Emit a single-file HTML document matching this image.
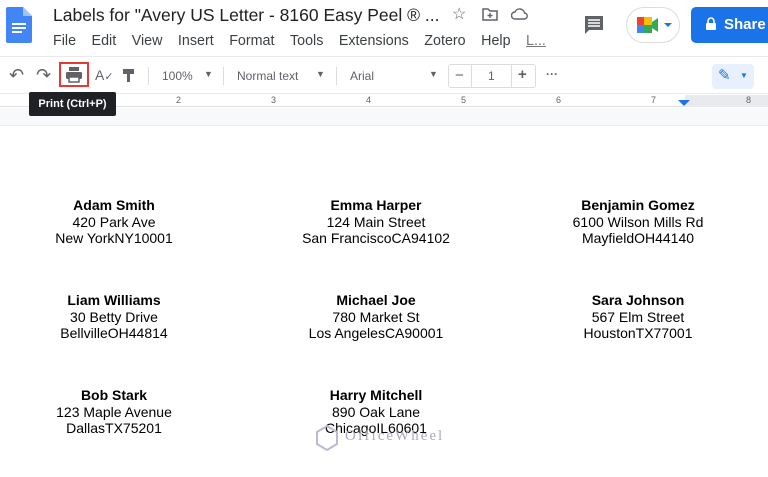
<!DOCTYPE html>
<html><head><style>
*{margin:0;padding:0;box-sizing:border-box}
body{width:768px;height:477px;overflow:hidden;background:#fff;font-family:"Liberation Sans",Arial,sans-serif;position:relative;color:#202124}
.a{position:absolute;white-space:nowrap}
.menu span{margin-right:15.5px}
.lbl{position:absolute;width:240px;text-align:center;font-size:14px;line-height:16.5px;color:#000}
.lbl b{display:block}
.tb{color:#5f6368;font-size:12px}
</style></head><body>
<svg class="a" style="left:6px;top:7px" width="26" height="36" viewBox="0 0 26 36"><path d="M2 0h15l9 9v25a2 2 0 0 1-2 2H2a2 2 0 0 1-2-2V2a2 2 0 0 1 2-2z" fill="#4285f4"/><path d="M17 0v9h9z" fill="#a1c2fa"/><rect x="6" y="16" width="14" height="2" fill="#fff"/><rect x="6" y="20" width="14" height="2" fill="#fff"/><rect x="6" y="24" width="10" height="2" fill="#fff"/></svg>
<div class="a" style="left:53px;top:5px;font-size:17.5px;color:#202124">Labels for "Avery US Letter - 8160 Easy Peel ® ...</div>
<div class="a" style="left:452px;top:4px;font-size:16px;color:#5f6368">☆</div>
<svg class="a" style="left:482px;top:8px" width="16" height="13"><path d="M1 1h5l2 2h7v9H1z" fill="none" stroke="#5f6368" stroke-width="1.5"/><path d="M8 5v5M5.5 7.5h5" stroke="#5f6368" stroke-width="1.4"/></svg>
<svg class="a" style="left:511px;top:8px" width="17" height="12"><path d="M4 11a3.5 3.5 0 0 1 0-7 5 5 0 0 1 9.5 1A3 3 0 0 1 13 11z" fill="none" stroke="#5f6368" stroke-width="1.4"/></svg>
<div class="a menu" style="left:53px;top:33px;font-size:14.3px;color:#3c4043"><span>File</span><span>Edit</span><span>View</span><span>Insert</span><span>Format</span><span>Tools</span><span>Extensions</span><span>Zotero</span><span>Help</span><span style="text-decoration:underline;color:#777">L...</span></div>
<svg class="a" style="left:583px;top:14px" width="22" height="22"><path d="M2 2h18v14H6l-4 4z" fill="#5f6368"/><path d="M5 6h12M5 9h12M5 12h12" stroke="#fff" stroke-width="1.4"/></svg>
<div class="a" style="left:626px;top:7px;width:54px;height:36px;border:1px solid #dadce0;border-radius:18px;background:#fff"></div>
<svg class="a" style="left:635px;top:15px" width="40" height="20"><rect x="2" y="2" width="7" height="8" fill="#ea4335"/><rect x="9" y="2" width="8" height="8" fill="#fbbc04"/><rect x="2" y="10" width="7" height="8" fill="#4285f4"/><rect x="9" y="10" width="8" height="8" fill="#34a853"/><path d="M17 7l6-4v14l-6-4z" fill="#34a853"/><path d="M29 8h8l-4 4z" fill="#1a73e8"/></svg>
<div class="a" style="left:691px;top:7px;width:82px;height:36px;background:#1a73e8;border-radius:5px;color:#fff;font-size:15px;font-weight:bold;line-height:36px;padding-left:33px">Share</div>
<svg class="a" style="left:705px;top:17px" width="12" height="14"><rect x="1" y="6" width="10" height="7" rx="1" fill="#fff"/><path d="M3 6V4a3 3 0 0 1 6 0v2" fill="none" stroke="#fff" stroke-width="1.6"/></svg>
<div class="a" style="left:0;top:56px;width:768px;height:1px;background:#e8eaed"></div>
<div class="a tb" style="left:9px;top:65px;font-size:18px">↶</div>
<div class="a tb" style="left:36px;top:65px;font-size:18px">↷</div>
<div class="a" style="left:59px;top:62px;width:30px;height:25px;border:2px solid #e53935"></div>
<svg class="a" style="left:65px;top:67px" width="18" height="16"><rect x="4" y="0" width="10" height="4" fill="#5f6368"/><rect x="1" y="5" width="16" height="7" rx="1.5" fill="#5f6368"/><rect x="4" y="10" width="10" height="5" fill="#fff" stroke="#5f6368" stroke-width="1.5"/></svg>
<div class="a tb" style="left:95px;top:67px;font-size:14px">A<span style="font-size:11px">✓</span></div>
<svg class="a" style="left:122px;top:68px" width="14" height="15"><rect x="1" y="1" width="11" height="5" fill="#5f6368"/><rect x="5" y="6" width="3" height="8" fill="#5f6368"/></svg>
<div class="a" style="left:148px;top:67px;width:1px;height:18px;background:#dadce0"></div>
<div class="a tb" style="left:162px;top:69px">100%</div><div class="a tb" style="left:204px;top:69px;font-size:9px">▼</div>
<div class="a" style="left:223px;top:67px;width:1px;height:18px;background:#dadce0"></div>
<div class="a tb" style="left:237px;top:69px">Normal text</div><div class="a tb" style="left:316px;top:69px;font-size:9px">▼</div>
<div class="a" style="left:336px;top:67px;width:1px;height:18px;background:#dadce0"></div>
<div class="a tb" style="left:350px;top:69px">Arial</div><div class="a tb" style="left:429px;top:69px;font-size:9px">▼</div>
<div class="a" style="left:448px;top:64px;width:88px;height:24px;border:1px solid #dadce0;border-radius:3px"></div>
<div class="a" style="left:471px;top:64px;width:1px;height:24px;background:#dadce0"></div>
<div class="a" style="left:511px;top:64px;width:1px;height:24px;background:#dadce0"></div>
<div class="a tb" style="left:455px;top:67px;font-size:15px">−</div>
<div class="a tb" style="left:488px;top:69px">1</div>
<div class="a tb" style="left:518px;top:66px;font-size:15px;font-weight:bold">+</div>
<div class="a tb" style="left:546px;top:67px;font-weight:bold">···</div>
<div class="a" style="left:712px;top:64px;width:42px;height:25px;background:#e8f0fe;border-radius:4px"></div>
<div class="a" style="left:718px;top:66px;font-size:15px;color:#1a73e8">✎</div>
<div class="a" style="left:740px;top:71px;font-size:8px;color:#1a73e8">▼</div>
<div class="a" style="left:0;top:93px;width:768px;height:1px;background:#e8eaed"></div>
<div class="a" style="left:0;top:95px;width:768px;height:12px;background:#fff;border-bottom:1px solid #e0e0e0"></div>
<div class="a" style="left:685px;top:95px;width:83px;height:12px;background:#e8eaed"></div>
<div class="a" style="left:0;top:95px;font-size:9px;color:#5f6368;letter-spacing:0">
<span class="a" style="left:176px">2</span><span class="a" style="left:271px">3</span><span class="a" style="left:366px">4</span><span class="a" style="left:461px">5</span><span class="a" style="left:556px">6</span><span class="a" style="left:651px">7</span><span class="a" style="left:746px">8</span></div>
<div class="a" style="left:678px;top:100px;width:0;height:0;border-left:6px solid transparent;border-right:6px solid transparent;border-top:6px solid #1a73e8"></div>
<div class="a" style="left:0;top:108px;width:768px;height:18px;background:#f8f9fa;border-bottom:1px solid #eee"></div>
<div class="a" style="left:29px;top:92px;width:87px;height:24px;background:#202124;color:#fff;font-size:11px;font-weight:bold;line-height:24px;text-align:center;border-radius:2px">Print (Ctrl+P)</div>
<div class="lbl" style="left:-6px;top:197px"><b>Adam Smith</b>420 Park Ave<br>New YorkNY10001</div>
<div class="lbl" style="left:256px;top:197px"><b>Emma Harper</b>124 Main Street<br>San FranciscoCA94102</div>
<div class="lbl" style="left:518px;top:197px"><b>Benjamin Gomez</b>6100 Wilson Mills Rd<br>MayfieldOH44140</div>
<div class="lbl" style="left:-6px;top:292px"><b>Liam Williams</b>30 Betty Drive<br>BellvilleOH44814</div>
<div class="lbl" style="left:256px;top:292px"><b>Michael Joe</b>780 Market St<br>Los AngelesCA90001</div>
<div class="lbl" style="left:518px;top:292px"><b>Sara Johnson</b>567 Elm Street<br>HoustonTX77001</div>
<div class="lbl" style="left:-6px;top:387px"><b>Bob Stark</b>123 Maple Avenue<br>DallasTX75201</div>
<div class="lbl" style="left:256px;top:387px"><b>Harry Mitchell</b>890 Oak Lane<br>ChicagoIL60601</div>
<div class="a" style="left:345px;top:428px;font-family:'Liberation Serif',serif;font-size:15px;letter-spacing:2px;color:#aab">OfficeWheel</div>
<svg class="a" style="left:314px;top:424px" width="26" height="28"><path d="M13 2l10 6v12l-10 6-10-6V8z" fill="none" stroke="#bbc" stroke-width="2"/></svg>
</body></html>
